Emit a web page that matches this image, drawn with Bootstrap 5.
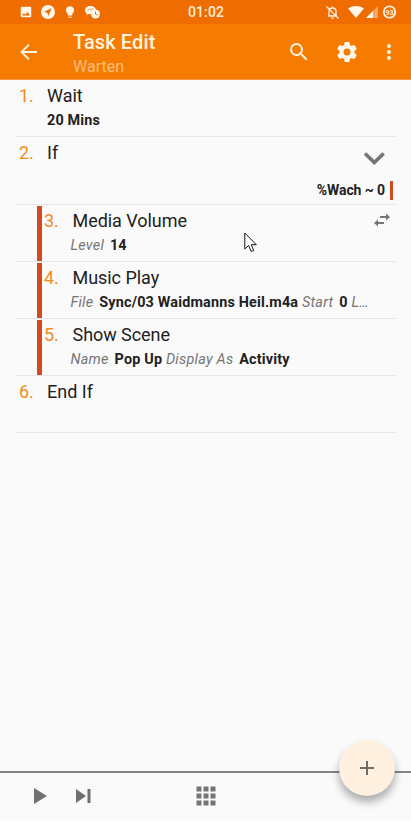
<!DOCTYPE html>
<html lang="en">
<head>
<meta charset="utf-8">
<meta name="viewport" content="width=device-width, initial-scale=1">
<title>Task Edit</title>
<link href="https://cdn.jsdelivr.net/npm/bootstrap@5.3.0/dist/css/bootstrap.min.css" rel="stylesheet">
<style>
body{font-family:Roboto,"Liberation Sans",sans-serif;background:#fafafa;color:#212121;height:824px;overflow:hidden}
svg{display:block;flex:none}
.screen{height:824px;border-bottom:4px solid #fff}
.statusbar{height:24px;background:#ef6c00;color:#ffeede;padding:0 14px 0 19px;font-size:14px}
.clock{font-size:14px;font-weight:500;line-height:24px;letter-spacing:.1px;margin-left:.5px}
.appbar{height:56px;background:#f57c00;color:#fff3e0;padding:0 10px 0 17px;border-bottom:1px solid #fb9a3e}
.heading{font-size:20px;font-weight:500;line-height:24px;letter-spacing:.1px;padding-top:5px}
.subtitle{font-size:16px;line-height:25px;color:#fbbd7d;letter-spacing:0}
.steps{margin:0 15px 0 16px}
.step{height:57px;border-bottom:1px solid #e7e7e7;padding-top:3px}
.step-if{height:68px}
.num{width:31px;padding-left:3px;color:#f58a20;font-size:18px;line-height:26px}
.label{font-size:18px;line-height:26px}
.detail{font-size:14.4px;line-height:22px;padding-top:1px;font-weight:700;white-space:nowrap;letter-spacing:.17px}
.detail i{font-weight:400;color:#757575;letter-spacing:.25px;margin-right:-1.600px}
.nested{padding-top:0;padding-left:21px}
.nested .bar{width:5px;height:55px;margin-top:1px;background:#d14a20}
.nested .num{padding-left:2px;width:30px}
.nested .content{padding-top:3px}
.nested .label{padding-left:.5px;letter-spacing:-.05px}
.nested .detail{margin-left:-1.500px}
.cond{border-right:3px solid #d14a20;padding-right:5px;margin-right:3px;font-size:14px;font-weight:700;line-height:19px;height:19px;letter-spacing:-.1px}
.toolbar{height:49px;border-top:2px solid #858585;padding:0 0 2px 28px}
.fab{width:56px;height:56px;background:#fff0df;box-shadow:0 6px 9px rgba(0,0,0,.32);right:16px;top:740px}
.pointer{left:244px;top:232px}
</style>
</head>
<body>
<div class="screen d-flex flex-column position-relative">
  <header>
    <div class="statusbar d-flex align-items-center position-relative">
      <svg width="14" height="14" viewBox="0 0 24 24" fill="#fff6ec"><path d="M21 19V5a2 2 0 0 0-2-2H5a2 2 0 0 0-2 2v14c0 1.100.9 2 2 2h14a2 2 0 0 0 2-2zM8.500 13.500l2.500 3 3.500-4.500 4.500 6H5z"/></svg>
      <svg class="ms-2" width="14" height="14" viewBox="0 0 14 14"><circle cx="7" cy="7" r="7" fill="#fff6ec"/><path d="M10.700 3.200 3 6.700l3.300 1 1 3.200z" fill="#ef6c00"/></svg>
      <svg class="ms-2" width="14" height="14" viewBox="0 0 24 24" fill="#fff6ec"><path d="M9 21c0 .6.400 1 1 1h4c.6 0 1-.4 1-1v-1H9zM12 2a7 7 0 0 0-4 12.700V17c0 .6.400 1 1 1h6c.6 0 1-.4 1-1v-2.300A7 7 0 0 0 12 2z"/></svg>
      <svg class="ms-2" width="16" height="14" viewBox="0 0 16 14"><path d="M5.500 1C2.200 1 0 2.800 0 5.200c0 1.400.7 2.500 2 3.300L1.500 10.300l2.200-1.200 2.500.2C7 6.500 9 5 11 5 10.500 2.600 8.500 1 5.500 1z" fill="#fff6ec"/><path d="M3 5.500 5 3.500M6 5.500 8 3.500" stroke="#ef6c00"/><circle cx="10.500" cy="9" r="4.500" fill="#fff6ec"/><path d="M10.500 6.500V9.200l2 .8" fill="none" stroke="#ef6c00"/></svg>
      <span class="clock position-absolute start-50 translate-middle-x">01:02</span>
      <svg class="ms-auto" width="15" height="15" viewBox="0 0 15 15" fill="none" stroke="#fff0e0" stroke-width="1.300"><path d="M3 11h9M4 10.500V6.500C4 4 5.500 3 7.500 3S11 4 11 6.500V11M7.500 1.500V3M6.500 13h2M1.500 1.500l12 12"/></svg>
      <svg style="margin-left:8px" width="16" height="12" viewBox="0 0 16 12"><path d="M0 2.500C4.500-.8 11.500-.8 16 2.500L8 12z" fill="#fff6ec"/></svg>
      <svg style="margin-left:2px" width="12" height="12" viewBox="0 0 12 12"><path d="M12 0v12H0z" fill="#f6a661"/><path d="M7 5v7H0z" fill="#fff6ec"/></svg>
      <svg class="ms-1" width="15" height="14" viewBox="0 0 15 14"><circle cx="7.500" cy="7" r="5.700" fill="none" stroke="#fff0e0" stroke-width="1.800"/><text x="7.500" y="9.500" font-size="7" font-weight="700" text-anchor="middle" fill="#fff0e0">93</text></svg>
    </div>
    <div class="appbar d-flex align-items-center">
      <svg width="24" height="24" viewBox="0 0 24 24" fill="none" stroke="#fff3e0" stroke-width="1.800"><path d="M20 12H5M12 4.500 4.500 12l7.500 7.500"/></svg>
      <div style="margin-left:32px">
        <div class="heading">Task Edit</div>
        <div class="subtitle">Warten</div>
      </div>
      <svg class="ms-auto" width="24" height="24" viewBox="0 0 24 24" fill="#fff3e0"><path d="M15.500 14h-.79l-.28-.27A6.470 6.470 0 0 0 16 9.500 6.500 6.500 0 1 0 9.500 16c1.610 0 3.090-.59 4.230-1.570l.27.28v.79l5 4.990L20.490 19zm-6 0a4.500 4.500 0 1 1 0-9 4.500 4.500 0 0 1 0 9z"/></svg>
      <svg class="ms-4" width="24" height="24" viewBox="0 0 24 24" fill="#fff6ea"><path d="M19.430 12.980c.04-.32.070-.64.070-.98s-.03-.66-.07-.98l2.110-1.650c.19-.15.240-.42.120-.64l-2-3.460c-.12-.22-.39-.3-.61-.22l-2.490 1c-.52-.4-1.080-.73-1.690-.98l-.38-2.650A.49.490 0 0 0 14 2h-4a.49.490 0 0 0-.49.420l-.38 2.650c-.61.250-1.170.59-1.690.98l-2.490-1c-.23-.09-.49 0-.61.220l-2 3.460c-.13.220-.07.490.12.640l2.110 1.650c-.04.320-.07.650-.07.980s.03.660.070.980l-2.110 1.650c-.19.150-.24.420-.12.640l2 3.460c.12.220.39.300.61.220l2.490-1c.52.400 1.080.73 1.690.98l.38 2.650c.03.240.24.420.49.420h4c.25 0 .46-.18.490-.42l.38-2.650c.61-.25 1.170-.59 1.690-.98l2.490 1c.23.090.49 0 .61-.22l2-3.460c.12-.22.070-.49-.12-.64zM12 15.500a3.500 3.500 0 1 1 0-7 3.500 3.500 0 0 1 0 7z"/></svg>
      <svg style="margin-left:18px" width="24" height="24" viewBox="0 0 24 24" fill="#fff3e0"><circle cx="12" cy="6" r="2"/><circle cx="12" cy="12" r="2"/><circle cx="12" cy="18" r="2"/></svg>
    </div>
  </header>
  <main class="steps flex-grow-1">
    <div class="step d-flex"><div class="num">1.</div><div><div class="label">Wait</div><div class="detail">20 Mins</div></div></div>
    <div class="step step-if d-flex"><div class="num">2.</div><div class="label">If</div>
      <div class="ms-auto d-flex flex-column align-items-end justify-content-between pb-1">
        <svg style="margin:10px 10px 0 0" width="24" height="17" viewBox="0 0 24 17" fill="none" stroke="#757575" stroke-width="3.600"><path d="m3 3.500 9.300 9L21.600 3.500"/></svg>
        <div class="cond">%Wach ~ 0</div>
      </div>
    </div>
    <div class="step nested d-flex"><div class="bar"></div><div class="content d-flex flex-grow-1"><div class="num">3.</div><div><div class="label">Media Volume</div><div class="detail"><i>Level</i>&nbsp; 14</div></div>
      <svg style="margin:5px 5px 0 0" class="ms-auto" width="18" height="14" viewBox="0 0 18 14" fill="#757575"><path d="M7 3h6V.500L17 4 13 7.500V5H7zM11 9H5V6.500L1 10 5 13.500V11h6z"/></svg></div></div>
    <div class="step nested d-flex"><div class="bar"></div><div class="content d-flex"><div class="num">4.</div><div><div class="label">Music Play</div><div class="detail"><i>File</i>&nbsp; Sync/03 Waidmanns Heil.m4a <i>Start</i>&nbsp; 0 <i>L…</i></div></div></div></div>
    <div class="step nested d-flex"><div class="bar"></div><div class="content d-flex"><div class="num">5.</div><div><div class="label">Show Scene</div><div class="detail"><i>Name</i>&nbsp; Pop Up <i>Display As</i>&nbsp; Activity</div></div></div></div>
    <div class="step d-flex"><div class="num">6.</div><div class="label">End If</div></div>
  </main>
  <footer class="toolbar d-flex align-items-center">
    <svg width="24" height="24" viewBox="0 0 24 24" fill="#707070"><path d="M6 4v16l13-8z"/></svg>
    <svg style="margin-left:19px" width="24" height="24" viewBox="0 0 24 24" fill="#707070"><path d="M5 5v14l10-7zM16.500 5h3v14h-3z"/></svg>
    <svg style="margin-left:99px" width="24" height="24" viewBox="0 0 24 24" fill="#757575"><path d="M2.500 2.500h5v5h-5zm7 0h5v5h-5zm7 0h5v5h-5zm-14 7h5v5h-5zm7 0h5v5h-5zm7 0h5v5h-5zm-14 7h5v5h-5zm7 0h5v5h-5zm7 0h5v5h-5z"/></svg>
  </footer>
  <div class="fab position-absolute rounded-circle d-flex align-items-center justify-content-center">
    <svg width="24" height="24" viewBox="0 0 24 24" stroke="#6f6a62" stroke-width="2"><path d="M5 12h14M12 5v14"/></svg>
  </div>
  <svg class="pointer position-absolute" width="14" height="21" viewBox="0 0 14 21"><path d="M.8 1v16l3.800-3.500 2.600 6 2.500-1.100-2.500-5.700h5.100z" fill="#fff" stroke="#111"/></svg>
</div>
<script src="https://cdn.jsdelivr.net/npm/bootstrap@5.3.0/dist/js/bootstrap.bundle.min.js"></script>
</body>
</html>
